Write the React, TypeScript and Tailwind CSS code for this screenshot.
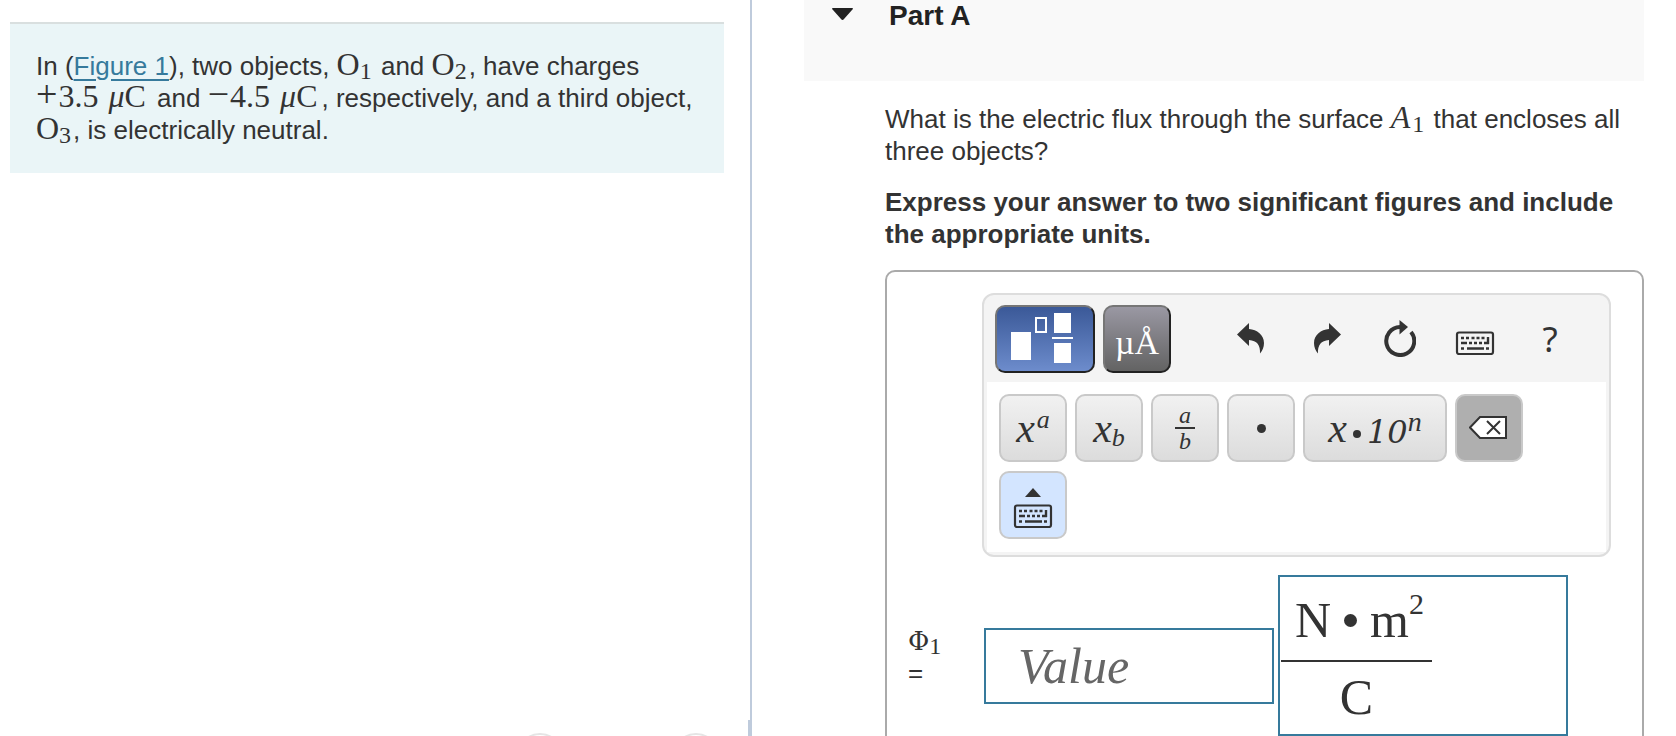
import type { ReactNode } from 'react';

interface ChildrenProps {
  children: ReactNode;
}

interface IconButtonProps extends ChildrenProps {
  label: string;
}

interface KeyProps extends IconButtonProps {
  className?: string;
}

function Num({ children }: ChildrenProps) {
  return <span className="font-['Liberation_Serif',serif] text-[32px] leading-0">{children}</span>;
}

function Sub({ children }: ChildrenProps) {
  return <sub className="bottom-[-4px] mr-0.5 text-[24px] leading-0">{children}</sub>;
}

function Charge({ sign, value }: { sign: string; value: string }) {
  return (
    <Num>
      <span className="mr-px text-[38px]">{sign}</span>
      {value} <i className="ml-0.5">μ</i>
      <span className="mr-1">C</span>
    </Num>
  );
}

function KeyboardIcon() {
  return (
    <svg width="40" height="24" viewBox="0 0 40 24" fill="none" aria-hidden="true">
      <rect x="2" y="1.500" width="36" height="21.500" rx="2" stroke="#333" strokeWidth="2.200" />
      <path
        d="M6 7h3M11 7h3M16.500 7h3M21.500 7h3M26.500 7h3M6 12h6M14 12h3M19 12h3M24 12h3M29 12h5M6 17.500h3M12 17.500h17M31 17.500h3"
        stroke="#333"
        strokeWidth="2.400"
      />
      <path d="M33 6v7" stroke="#333" strokeWidth="2.400" />
    </svg>
  );
}

function ToolButton({ label, children }: IconButtonProps) {
  return (
    <button type="button" aria-label={label} className="flex h-10 w-10 items-center justify-center">
      {children}
    </button>
  );
}

function Key({ label, className = 'w-[68px]', children }: KeyProps) {
  return (
    <button
      type="button"
      aria-label={label}
      className={`flex h-[68px] items-center justify-center rounded-[10px] border-2 border-[#c9c9c9] bg-linear-to-b from-[#f1f1f1] to-[#dcdcdc] font-['Liberation_Serif',serif] italic ${className}`}
    >
      {children}
    </button>
  );
}

function Toolbar() {
  return (
    <div className="flex items-center justify-between pt-2.5 pr-9 pb-[9px] pl-2">
      <div className="flex gap-2">
        <button
          type="button"
          aria-label="Templates"
          className="flex h-[68px] w-[100px] items-center justify-center rounded-[10px] border-2 border-t-[#767676] border-r-[#222] border-b-[#222] border-l-[#767676] bg-linear-to-b from-[#3b5998] to-[#6d8ccc] pr-2 pb-0.5"
        >
          <svg width="64" height="52" viewBox="0 0 64 52" fill="none" aria-hidden="true">
            <path d="M2 20h20v28H2zM45 1h17v20H45zM45 31h17v20H45zM43 25h21v2H43z" fill="#fff" />
            <path d="M27 6h10v14H27z" stroke="#fff" strokeWidth="2" />
          </svg>
        </button>
        <button
          type="button"
          aria-label="Symbols"
          className="flex h-[68px] w-[68px] items-center justify-center rounded-[10px] border-2 border-t-[#767676] border-r-[#222] border-b-[#222] border-l-[#767676] bg-linear-to-b from-[#9a98a3] to-[#636363] pt-2 font-['Liberation_Serif',serif] text-[34px] leading-none text-white"
        >
          µÅ
        </button>
      </div>
      <div className="flex items-center gap-[35px] pb-0.5">
        <ToolButton label="Undo">
          <svg width="27" height="31" viewBox="0 0 27 31" fill="#333" aria-hidden="true">
            <path d="M0 11.500 12 0v6C20 6.500 27 12 27 20c0 4-1.500 8-4 10.500C23.500 22 20 17.500 12 17v6Z" />
          </svg>
        </ToolButton>
        <ToolButton label="Redo">
          <svg width="27" height="31" viewBox="0 0 27 31" fill="#333" className="ml-1" aria-hidden="true">
            <path d="M27 11.500 15 0v6C7 6.500 0 12 0 20c0 4 1.500 8 4 10.500C3.500 22 7 17.500 15 17v6Z" />
          </svg>
        </ToolButton>
        <ToolButton label="Reset">
          <svg width="32" height="37" viewBox="0 0 32 37" aria-hidden="true">
            <path d="M16 7A14 14 0 1 0 27 12" fill="none" stroke="#333" strokeWidth="4" />
            <path d="M15.500 0 24 7 15.500 14.500Z" fill="#333" />
          </svg>
        </ToolButton>
        <ToolButton label="Keyboard shortcuts">
          <span className="pt-2.5">
            <KeyboardIcon />
          </span>
        </ToolButton>
        <ToolButton label="Help">
          <span className="font-['Noto_Sans',sans-serif] text-[35px] leading-none">?</span>
        </ToolButton>
      </div>
    </div>
  );
}

function MathEditor() {
  return (
    <div className="mr-[31px] ml-[95px] rounded-xl border-2 border-[#ddd] bg-[#f4f4f4] px-[3px] pb-[3px]">
      <Toolbar />
      <div className="flex flex-wrap gap-x-2 gap-y-[9px] bg-white px-3 pt-3 pb-[13px]">
        <Key label="Superscript">
          <span className="text-[42px] leading-none">x</span>
          <sup className="top-[-8px] ml-0.5 text-[26px] leading-none">a</sup>
        </Key>
        <Key label="Subscript">
          <span className="text-[42px] leading-none">x</span>
          <sub className="bottom-[-10px] text-[26px] leading-none">b</sub>
        </Key>
        <Key label="Fraction">
          <span className="flex w-5 flex-col items-center text-[24px] leading-6">
            <span className="w-full border-b-2 border-[#333]">a</span>
            <span>b</span>
          </span>
        </Key>
        <Key label="Multiplication dot">
          <span className="h-[9px] w-[9px] rounded-full bg-[#333]" />
        </Key>
        <Key label="Scientific notation" className="w-[144px]">
          <span className="text-[42px] leading-none">x</span>
          <span className="mx-1.5 mt-3 h-2 w-2 rounded-full bg-[#333]" />
          <span className="pt-2 font-['DejaVu_Serif',serif] text-[32px] leading-none">10</span>
          <sup className="top-[-6px] text-[28px] leading-none">n</sup>
        </Key>
        <button
          type="button"
          aria-label="Delete"
          className="flex h-[68px] w-[68px] items-center justify-center rounded-[10px] border-2 border-[#c9c9c9] bg-[#afafaf] pr-0.5 pb-0.5"
        >
          <svg width="38" height="23" viewBox="0 0 38 23" fill="#fff" stroke="#333" strokeWidth="2" aria-hidden="true">
            <path d="M1 11.500 11 1h26v21H11Z" />
            <path d="m18 5 13 13M31 5 18 18" />
          </svg>
        </button>
        <button
          type="button"
          aria-label="Hide keyboard"
          className="flex h-[68px] w-[68px] flex-col items-center justify-center gap-[7px] rounded-[10px] border-2 border-[#c9c9c9] bg-[#d3e5ff] pt-1.5"
        >
          <svg width="16" height="9" viewBox="0 0 16 9" fill="#333" aria-hidden="true">
            <path d="M8 0 16 9H0Z" />
          </svg>
          <KeyboardIcon />
        </button>
      </div>
    </div>
  );
}

function AnswerRow() {
  return (
    <div className="flex items-center gap-1 pt-[18px] pl-[21px] font-['Liberation_Serif',serif]">
      <label htmlFor="answer-value" className="w-[72px] leading-[34px]">
        <span className="block text-[32px]">
          <span className="font-['DejaVu_Serif',serif] text-[26px] leading-0">Φ</span>
          <Sub>1</Sub>
        </span>
        <span className="block font-['Liberation_Sans',sans-serif] text-[26px]">=</span>
      </label>
      <input
        id="answer-value"
        type="text"
        placeholder="Value"
        className="mt-5 h-[76px] w-[290px] border-2 border-[#367a9c] px-8 text-[50px] outline-none placeholder:text-[#666] placeholder:italic"
      />
      <div
        role="textbox"
        tabIndex={0}
        aria-label="Units"
        className="h-[161px] w-[290px] border-2 border-[#367a9c] pl-px text-[50px] leading-[60px] outline-none"
      >
        <div className="w-[151px]">
          <div className="flex items-center border-b-2 border-[#333] pt-[13px] pb-2.5 pl-3.5">
            <span>N</span>
            <span className="mx-[13px] h-[13px] w-[13px] shrink-0 rounded-full bg-[#333]" />
            <span>m</span>
            <sup className="top-[-16px] text-[30px] leading-none">2</sup>
          </div>
          <div className="pt-[5px] text-center">C</div>
        </div>
      </div>
    </div>
  );
}

function ProblemPane() {
  return (
    <section className="relative overflow-hidden border-r-2 border-[#bfcbdc] pt-[22px] pr-[26px] pl-2.5">
      <div className="border-t-2 border-[#d9dfdf] bg-[#eaf5f7] pt-[26px] pb-[27px] pl-[26px]">
        <p className="whitespace-nowrap">
          In (
          <a href="#figure-1" className="text-[#367a9c] underline underline-offset-4">
            Figure 1
          </a>
          ), two objects, <Num>O<Sub>1</Sub></Num> and <Num>O<Sub>2</Sub></Num>, have charges
          <br />
          <Charge sign="+" value="3.5" /> and <Charge sign="−" value="4.5" />, respectively, and a third object,
          <br />
          <Num>O<Sub>3</Sub></Num>, is electrically neutral.
        </p>
      </div>
      <div className="flex justify-end gap-[108px] pt-[560px]">
        <button type="button" aria-label="Previous figure" className="h-12 w-12 rounded-full border-2 border-[#e5e5e5]" />
        <button type="button" aria-label="Next figure" className="mr-1 h-12 w-12 rounded-full border-2 border-[#e5e5e5]" />
      </div>
      <span className="absolute right-0 bottom-0 h-4 w-0.5 bg-[#bfcbdc]" />
    </section>
  );
}

function PartPane() {
  return (
    <section className="overflow-hidden pr-8 pl-[52px]">
      <header className="flex h-[81px] gap-9 bg-[#f9f9f9] pl-7">
        <svg width="21" height="12" viewBox="0 0 21 12" fill="#222" className="mt-2" aria-hidden="true">
          <path d="M1 0h19q2 0 0 2l-8 9q-1.500 2-3 0L1 2Q-1 0 1 0Z" />
        </svg>
        <h2 className="text-[28px] leading-8 font-bold text-[#222]">Part A</h2>
      </header>
      <div className="pt-[22px] pl-[81px]">
        <p>
          What is the electric flux through the surface{' '}
          <Num>
            <i className="mr-0.5">A</i>
            <Sub>1</Sub>
          </Num>{' '}
          that encloses all three objects?
        </p>
        <p className="pt-[19px] font-bold">
          Express your answer to two significant figures and include the appropriate units.
        </p>
        <div className="mt-5 rounded-[10px] border-2 border-[#aaa] pt-[21px] pb-8">
          <MathEditor />
          <AnswerRow />
        </div>
      </div>
    </section>
  );
}

export default function App() {
  return (
    <main className="grid h-screen grid-cols-[752fr_924fr] overflow-hidden bg-white font-['Liberation_Sans',Arial,sans-serif] text-[26px] leading-8 text-[#333]">
      <ProblemPane />
      <PartPane />
    </main>
  );
}
